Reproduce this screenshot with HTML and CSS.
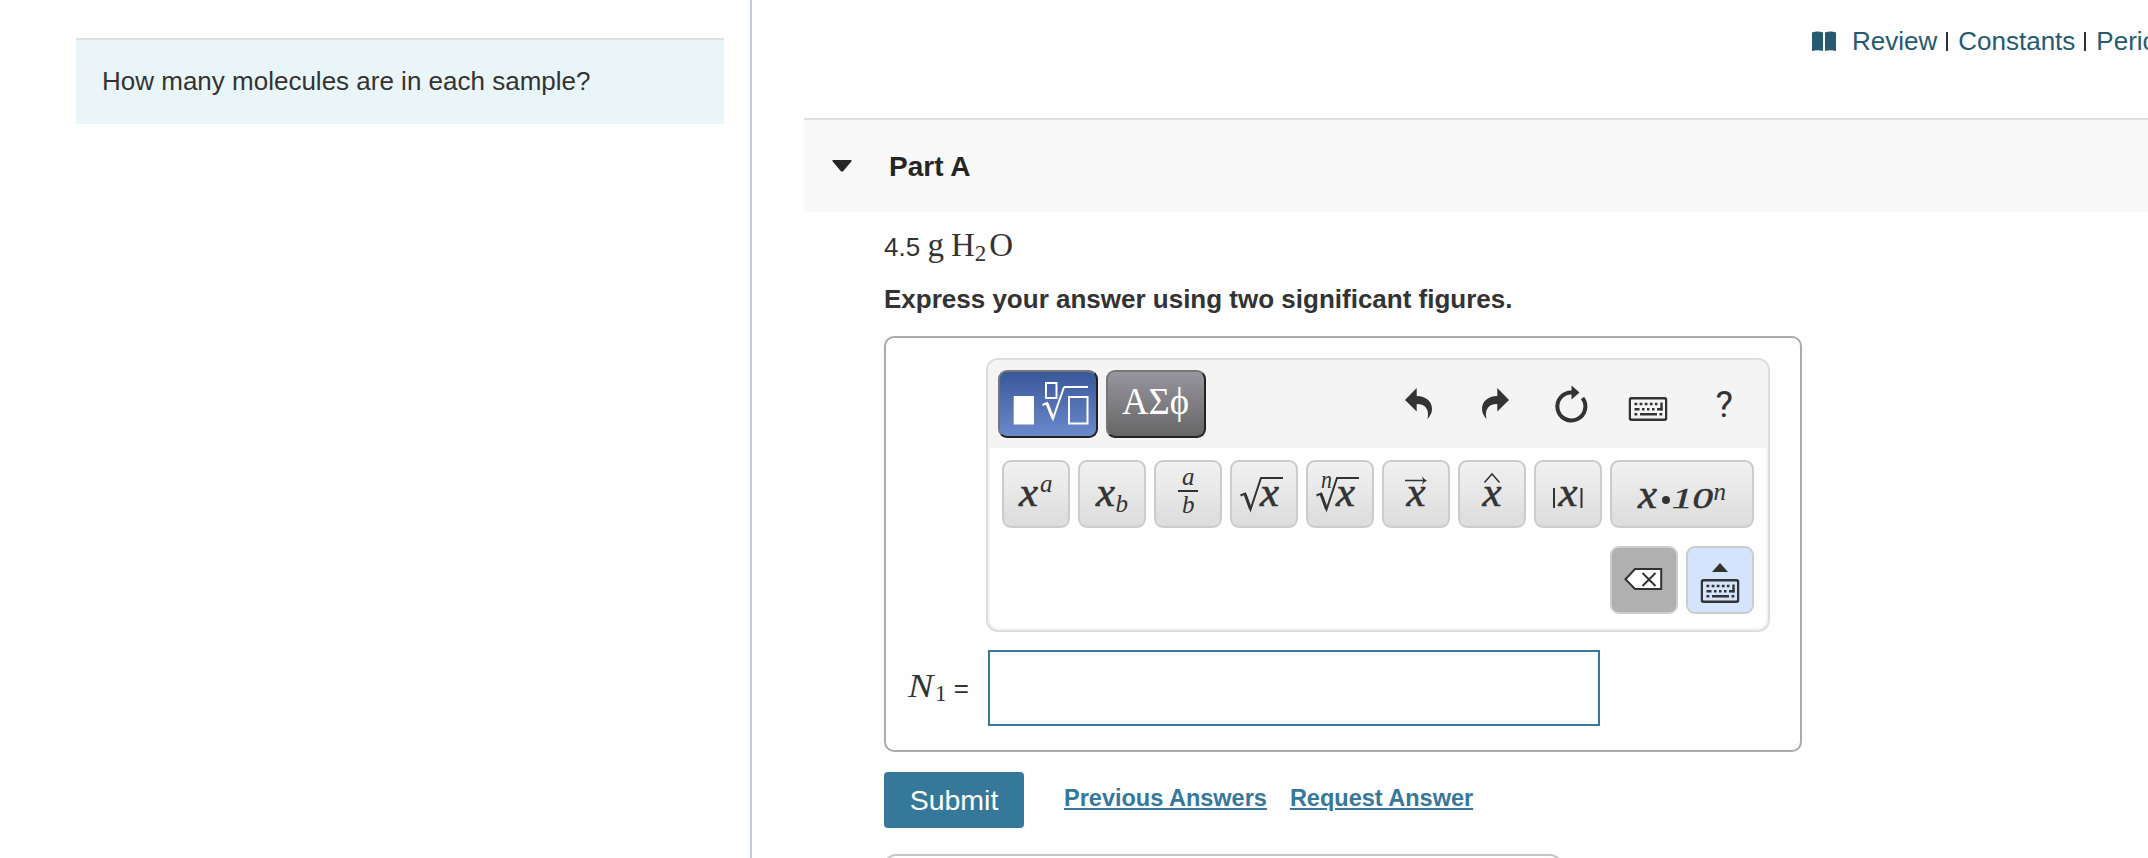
FILE: index.html
```html
<!DOCTYPE html>
<html lang="en">
<head>
  <meta charset="UTF-8">
  <title>Part A</title>
  <link rel="stylesheet" href="styles.css">
</head>
<body>
  <svg class="defs" width="0" height="0">
    <symbol id="keyboard" viewBox="0 0 39 24">
      <rect x="1.25" y="1.25" width="36.5" height="21.5" rx="2" fill="none" stroke="#333" stroke-width="2.5"/>
      <path d="M6 7h23M6 17.3h3M31 17.3h3" stroke="#333" stroke-width="2.6" stroke-dasharray="2.8 2.3" fill="none"/>
      <path d="M6 12.2h5M13.5 12.2h2.5M18.5 12.2h2.5M23.5 12.2h2.5M28.500 12.2h5.5M11.5 17.3h17" stroke="#333" stroke-width="2.4" fill="none"/>
      <path d="M33 5.5v8" stroke="#333" stroke-width="2.4"/>
    </symbol>
  </svg>

  <div class="page">
    <aside class="sidebar">
      <div class="question">How many molecules are in each sample?</div>
    </aside>

    <main class="content">
      <nav class="resources">
        <svg class="book" width="24" height="21" viewBox="0 0 24 21"><path d="M0 1.500Q5.500-.5 11 1.500V20Q5.500 18.500 0 20zM13 1.500Q18.500-.5 24 1.500V20Q18.500 18.500 13 20z" fill="#255a70"/></svg>
        <a>Review</a><span class="sep"></span><a>Constants</a><span class="sep"></span><a>Periodic Table</a>
      </nav>

      <header class="part-header">
        <svg width="20" height="12" viewBox="0 0 20 12"><path d="M1.500 0h17q2 0 .8 1.500l-8 9.500q-1.300 1.500-2.600 0l-8-9.500Q-.5 0 1.500 0z" fill="#252525"/></svg>
        <h2>Part A</h2>
      </header>

      <section class="part-body">
        <p class="given">4.5 <span class="math">g<span class="gap"></span>H<span class="two">2</span><span class="oxygen">O</span></span></p>
        <p class="instructions">Express your answer using two significant figures.</p>

        <div class="answer-box">
          <div class="editor">
            <div class="toolbar">
              <button class="mode mode-active">
                <svg width="96" height="64" viewBox="2 2 96 64">
                  <rect x="15.700" y="26" width="20.300" height="28.500" fill="#fff"/>
                  <g fill="none" stroke="#fff" stroke-width="2">
                    <rect x="48" y="13" width="10.500" height="15"/>
                    <rect x="71" y="27" width="18.500" height="26.500"/>
                    <path d="M66 17H90"/>
                    <path d="M44.500 35l4.500-2 6 15.500L66 17"/>
                    <path d="M49 33.500l6 15" stroke-width="3"/>
                  </g>
                </svg>
              </button>
              <button class="mode">
                <svg width="96" height="64" viewBox="2 2 96 64"><text class="greek" x="16" y="43.500" textLength="67" lengthAdjust="spacingAndGlyphs">ΑΣϕ</text></svg>
              </button>
              <div class="tools">
                <svg width="76" height="68"><path d="M25 30L36.700 18v8C46 26.500 52 31 52 39q0 5-4.500 10c2-9-1.500-15-10.800-15v7.500z"/></svg>
                <svg width="76" height="68"><path d="M53 30L41.300 18v8C32 26.500 26 31 26 39q0 5 4.500 10c-2-9 1.500-15 10.800-15v7.500z"/></svg>
                <svg width="76" height="68"><path d="M50.500 28A14 14 0 1 1 40 22.500" fill="none" stroke="#333" stroke-width="4"/><path d="M39.500 15.500l8 7-8 7z"/></svg>
                <svg width="76" height="68"><use href="#keyboard" x="20.500" y="27" width="39" height="24"/></svg>
                <svg width="76" height="68"><text class="help" x="31.500" y="47">?</text></svg>
              </div>
            </div>

            <div class="keys">
              <button class="key"><svg width="64" height="64" viewBox="2 2 64 64">
                <text class="var" x="17" y="46" textLength="19" lengthAdjust="spacingAndGlyphs">x</text><text class="small" x="38" y="31.700">a</text>
              </svg></button>
              <button class="key"><svg width="64" height="64" viewBox="2 2 64 64">
                <text class="var" x="18" y="46" textLength="19" lengthAdjust="spacingAndGlyphs">x</text><text class="small" x="37.500" y="51.700">b</text>
              </svg></button>
              <button class="key"><svg width="64" height="64" viewBox="2 2 64 64">
                <text class="small" x="28" y="25">a</text><path d="M24 31H44" stroke="#333" stroke-width="2"/><text class="small" x="28" y="53">b</text>
              </svg></button>
              <button class="key"><svg width="64" height="64" viewBox="2 2 64 64">
                <path class="root" d="M10.500 35.500l4.500-2 5.500 16L31 18H53"/><path class="root-thick" d="M15 34l5.500 15"/>
                <text class="var" x="30" y="46" textLength="19" lengthAdjust="spacingAndGlyphs">x</text>
              </svg></button>
              <button class="key"><svg width="64" height="64" viewBox="2 2 64 64">
                <text class="small" x="15" y="27.700" textLength="11" lengthAdjust="spacingAndGlyphs">n</text>
                <path class="root" d="M10.500 35.500l4.500-2 5.500 16L31 18H53"/><path class="root-thick" d="M15 34l5.500 15"/>
                <text class="var" x="30" y="46" textLength="19" lengthAdjust="spacingAndGlyphs">x</text>
              </svg></button>
              <button class="key"><svg width="64" height="64" viewBox="2 2 64 64">
                <path d="M23 20.500H43" stroke="#333" stroke-width="1.500"/><path d="M40 16q1.500 3 5 4.500-3.500 1.500-5 4.500l1.200-4.500z" fill="#333"/>
                <text class="var" x="24.500" y="46" textLength="19" lengthAdjust="spacingAndGlyphs">x</text>
              </svg></button>
              <button class="key"><svg width="64" height="64" viewBox="2 2 64 64">
                <path d="M26.500 22.500l7.500-8.500 7.500 8.500" fill="none" stroke="#333" stroke-width="1.500"/>
                <text class="var" x="24.500" y="46" textLength="19" lengthAdjust="spacingAndGlyphs">x</text>
              </svg></button>
              <button class="key"><svg width="64" height="64" viewBox="2 2 64 64">
                <path d="M20 28V48M47.500 28V48" stroke="#333" stroke-width="2"/>
                <text class="var" x="24.500" y="46" textLength="19" lengthAdjust="spacingAndGlyphs">x</text>
              </svg></button>
              <button class="key key-wide"><svg width="140" height="64" viewBox="2 2 140 64">
                <text class="var" x="28" y="48" textLength="19" lengthAdjust="spacingAndGlyphs">x</text>
                <circle cx="56" cy="40" r="4" fill="#333"/>
                <text class="digits" x="62" y="48" textLength="41" lengthAdjust="spacingAndGlyphs">10</text>
                <text class="small" x="103.500" y="39.700">n</text>
              </svg></button>
              <button class="key key-delete"><svg width="64" height="64" viewBox="2 2 64 64">
                <path d="M15.500 33.200L25 23H51.200V43H25z" fill="#fff" stroke="#333" stroke-width="2"/>
                <path d="M32.500 27l13 13M45.500 27l-13 13" stroke="#333" stroke-width="2"/>
              </svg></button>
              <button class="key key-toggle"><svg width="64" height="64" viewBox="2 2 64 64">
                <path d="M26 26l8-9 8 9z" fill="#333"/>
                <use href="#keyboard" x="14.500" y="33" width="39" height="24"/>
              </svg></button>
            </div>
          </div>

          <div class="answer-row">
            <label for="answer"><i>N</i><span class="one">1</span> =</label>
            <input type="text" id="answer">
          </div>
        </div>

        <div class="actions">
          <button class="submit">Submit</button>
          <a class="link">Previous Answers</a>
          <a class="link">Request Answer</a>
        </div>

        <div class="feedback"></div>
      </section>
    </main>
  </div>
</body>
</html>
```

FILE: styles.css
```css
* {
  box-sizing: border-box;
}
body {
  margin: 0;
  background: #fefefe;
  color: #333;
  font-family: "Liberation Sans", Arial, sans-serif;
  font-size: 26px;
  overflow: hidden;
}
.defs {
  display: block;
}
.page {
  display: flex;
  height: 858px;
  overflow: hidden;
}
.sidebar {
  flex: none;
  width: 752px;
  padding: 38px 26px 0 76px;
  border-right: 2px solid #c2cddc;
}
.question {
  height: 86px;
  padding: 0 26px;
  border-top: 2px solid #dfe1e0;
  background: #eaf5f8;
  line-height: 82px;
}

/* right column */
.content {
  flex: 1;
  min-width: 0;
  padding-left: 52px;
}
.resources {
  display: flex;
  align-items: center;
  height: 118px;
  padding: 0 0 36px 1008px;
  overflow: hidden;
  color: #255a70;
  white-space: nowrap;
}
.book {
  flex: none;
  margin-right: 16px;
}
.sep {
  flex: none;
  width: 2px;
  height: 19px;
  margin: 0 10px 0 9px;
  background: #333;
}
.part-header {
  display: flex;
  align-items: center;
  height: 94px;
  padding-left: 28px;
  border-top: 2px solid #dedede;
  background: #f9f9f9;
}
.part-header h2 {
  margin: 2px 0 0 37px;
  color: #252525;
  font-size: 28px;
}
.part-body {
  padding-left: 80px;
}
.given {
  height: 68px;
  margin: 0;
  line-height: 67px;
}
.math {
  font-family: "Liberation Serif", serif;
  font-size: 33px;
}
.gap {
  display: inline-block;
  width: 7px;
}
.two {
  position: relative;
  top: 5px;
  font-size: 23px;
}
.oxygen {
  margin-left: 3px;
}
.instructions {
  height: 56px;
  margin: 0;
  font-weight: bold;
  line-height: 38px;
}

/* answer box */
.answer-box {
  width: 918px;
  height: 416px;
  padding: 20px 30px 24px 0;
  border: 2px solid #aaa;
  border-radius: 10px;
}
.editor {
  width: 784px;
  height: 274px;
  margin-left: 100px;
  border: 2px solid #ddd;
  border-radius: 12px;
  box-shadow: inset 0 0 0 2px #f4f4f4;
}
.toolbar {
  display: flex;
  gap: 8px;
  height: 88px;
  padding: 10px;
  border-radius: 10px 10px 0 0;
  background: #f4f4f4;
}
button {
  padding: 0;
  font-family: inherit;
}
button svg {
  display: block;
}
.mode {
  width: 100px;
  height: 68px;
  border: 2px solid;
  border-color: #767676 #222 #222 #767676;
  border-radius: 9px;
  background: linear-gradient(#97959d, #666);
}
.mode-active {
  background: linear-gradient(#3a5799, #6b8acb);
}
.greek {
  fill: #fff;
  font-family: "Liberation Serif", serif;
  font-size: 37px;
}
.tools {
  display: flex;
  margin-left: auto;
  margin-right: -2px;
}
.tools svg {
  fill: #333;
}
.help {
  font-family: Roboto, sans-serif;
  font-size: 37px;
}
.keys {
  display: flex;
  flex-wrap: wrap;
  justify-content: flex-end;
  gap: 18px 8px;
  padding: 12px 14px 0;
}
.key {
  width: 68px;
  height: 68px;
  border: 2px solid #ccc;
  border-radius: 9px;
  background: linear-gradient(#f1f1f1, #dcdcdc);
}
.key-wide {
  width: 144px;
}
.key-delete {
  background: #b0b0b0;
}
.key-toggle {
  background: #d3e4fc;
}
.key text {
  fill: #333;
  font-family: "Liberation Serif", serif;
  font-style: italic;
}
.key .var {
  font-size: 40px;
  stroke: #333;
  stroke-width: 0.6;
}
.key .small {
  font-size: 25px;
}
.key .digits {
  font-size: 30px;
  stroke: #333;
  stroke-width: 0.5;
}
.root {
  fill: none;
  stroke: #333;
  stroke-width: 2;
}
.root-thick {
  stroke: #333;
  stroke-width: 3;
}
.answer-row {
  display: flex;
  align-items: center;
  height: 76px;
  margin-top: 18px;
}
.answer-row label {
  width: 102px;
  padding: 0 0 4px 22px;
  white-space: nowrap;
}
.answer-row i {
  display: inline-block;
  margin-right: 5px;
  font-family: "Liberation Serif", serif;
  font-size: 33px;
  transform: scaleX(1.15);
  transform-origin: left;
}
.one {
  position: relative;
  top: 4px;
  font-family: "Liberation Serif", serif;
  font-size: 23px;
}
.answer-row input {
  width: 612px;
  height: 76px;
  padding: 0 10px;
  border: 2px solid #36789a;
  background: #fff;
  font-size: 26px;
  outline: none;
}

.actions {
  display: flex;
  align-items: center;
  height: 56px;
  margin-top: 20px;
}
.submit {
  width: 140px;
  height: 56px;
  margin-right: 40px;
  border: none;
  border-radius: 4px;
  background: #36789a;
  color: #fff;
  font-size: 28.5px;
}
.link {
  margin: 0 23px 3px 0;
  color: #36789a;
  font-size: 23.5px;
  font-weight: bold;
  text-decoration: underline;
  text-decoration-thickness: 2px;
  text-underline-offset: 2px;
}
.feedback {
  width: 678px;
  height: 60px;
  margin-top: 26px;
  border: 2px solid #c4c4c4;
  border-radius: 12px;
}
```
